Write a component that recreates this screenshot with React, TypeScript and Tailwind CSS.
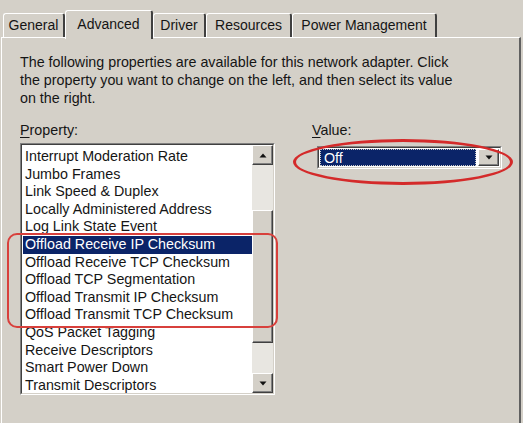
import React from "react";

const items = [
  "Interrupt Moderation Rate",
  "Jumbo Frames",
  "Link Speed & Duplex",
  "Locally Administered Address",
  "Log Link State Event",
  "Offload Receive IP Checksum",
  "Offload Receive TCP Checksum",
  "Offload TCP Segmentation",
  "Offload Transmit IP Checksum",
  "Offload Transmit TCP Checksum",
  "QoS Packet Tagging",
  "Receive Descriptors",
  "Smart Power Down",
  "Transmit Descriptors",
];

function Arrow({ up }: { up?: boolean }) {
  return (
    <svg width="8" height="5" viewBox="0 0 8 5">
      <path d={up ? "M4 0.5 L7.5 4.5 L0.5 4.5 Z" : "M0.5 0.5 L7.5 0.5 L4 4.5 Z"} fill="#111" />
    </svg>
  );
}

function RaisedButton({ up, className }: { up?: boolean; className: string }) {
  return (
    <div className={`flex items-center justify-center bg-[#d4d0c8] border border-t-white border-l-white border-r-[#404040] border-b-[#404040] shadow-[inset_-1px_-1px_#808080] ${className}`}>
      <Arrow up={up} />
    </div>
  );
}

function Tab({ label, w, selected }: { label: string; w: string; selected?: boolean }) {
  return selected ? (
    <div className={`relative z-10 -mb-[2px] h-[29px] ${w} flex items-start justify-center pt-[3px] bg-[#d4d0c8] border-t border-l border-r-2 border-t-white border-l-white border-r-[#404040] rounded-t-[3px]`}>
      {label}
    </div>
  ) : (
    <div className={`h-[24px] ${w} flex items-center justify-center bg-[#d4d0c8] border-t border-l border-r-2 border-t-white border-l-white border-r-[#404040] rounded-t-[3px]`}>
      {label}
    </div>
  );
}

export default function App() {
  return (
    <div
      className="relative w-[523px] h-[423px] overflow-hidden bg-[#d4d0c8] text-[14px] text-[#151515]"
      style={{ fontFamily: '"Liberation Sans", Arial, sans-serif' }}
    >
      {/* tabs */}
      <div className="flex items-end h-[37px] pl-[3px]">
        <Tab label="General" w="w-[62px]" />
        <Tab label="Advanced" w="w-[88px]" selected />
        <Tab label="Driver" w="w-[53px]" />
        <Tab label="Resources" w="w-[86px]" />
        <Tab label="Power Management" w="w-[145px]" />
      </div>

      {/* panel */}
      <div className="ml-[1px] w-[520px] h-[390px] border-t border-l border-r-2 border-t-white border-l-white border-r-[#606060] pl-[18px] pt-[15px] text-[14.3px]">
        <p className="leading-[18px]">
          The following properties are available for this network adapter. Click
          <br />
          the property you want to change on the left, and then select its value
          <br />
          on the right.
        </p>

        <div className="flex mt-[14px]">
          {/* property column */}
          <div className="flex flex-col">
            <div className="leading-[18px] h-[22px]">
              <span className="underline underline-offset-2">P</span>roperty:
            </div>
            <div className="w-[255px] h-[252px] border border-t-[#808080] border-l-[#808080] border-b-white border-r-white">
              <div className="flex h-full bg-white border border-t-[#404040] border-l-[#404040] border-b-[#d4d0c8] border-r-[#d4d0c8]">
                <div className="flex-1 pt-[3px] pl-[1px]">
                  {items.map((it) => (
                    <div
                      key={it}
                      className={`h-[17.6px] leading-[17.6px] pl-[2px] whitespace-nowrap ${
                        it === "Offload Receive IP Checksum" ? "bg-[#0b2468] text-white" : ""
                      }`}
                    >
                      {it}
                    </div>
                  ))}
                </div>
                {/* scrollbar */}
                <div className="w-[21px] flex flex-col bg-[#e8e6e1]">
                  <RaisedButton up className="h-[20px]" />
                  <div className="h-[45px]" />
                  <div className="h-[133px] bg-[#d4d0c8] border border-t-white border-l-white border-r-[#404040] border-b-[#404040] shadow-[inset_-1px_-1px_#808080]" />
                  <div className="flex-1" />
                  <RaisedButton className="h-[20px]" />
                </div>
              </div>
            </div>
          </div>

          {/* value column */}
          <div className="flex flex-col ml-[37px]">
            <div className="leading-[18px] h-[22px]">
              <span className="underline underline-offset-2">V</span>alue:
            </div>
            <div className="ml-[5px] mt-[3px] w-[185px] h-[23px] border border-t-[#808080] border-l-[#808080] border-b-white border-r-white">
              <div className="flex h-full bg-white border border-t-[#404040] border-l-[#404040] border-b-[#d4d0c8] border-r-[#d4d0c8] p-[1px]">
                <div className="flex-1 bg-[#0b2468] text-white leading-[16px] pl-[3px] border border-dotted border-[#c8c8c8]">
                  Off
                </div>
                <RaisedButton className="w-[21px] ml-[2px]" />
              </div>
            </div>
          </div>
        </div>
      </div>

      {/* annotations */}
      <div className="absolute left-[7px] top-[233px] w-[271px] h-[95px] border-2 border-[#d8403c] rounded-[10px]" />
      <div className="absolute left-[293px] top-[139px] w-[220px] h-[46px] border-[3px] border-[#d42a2a] rounded-[50%]" />
    </div>
  );
}
